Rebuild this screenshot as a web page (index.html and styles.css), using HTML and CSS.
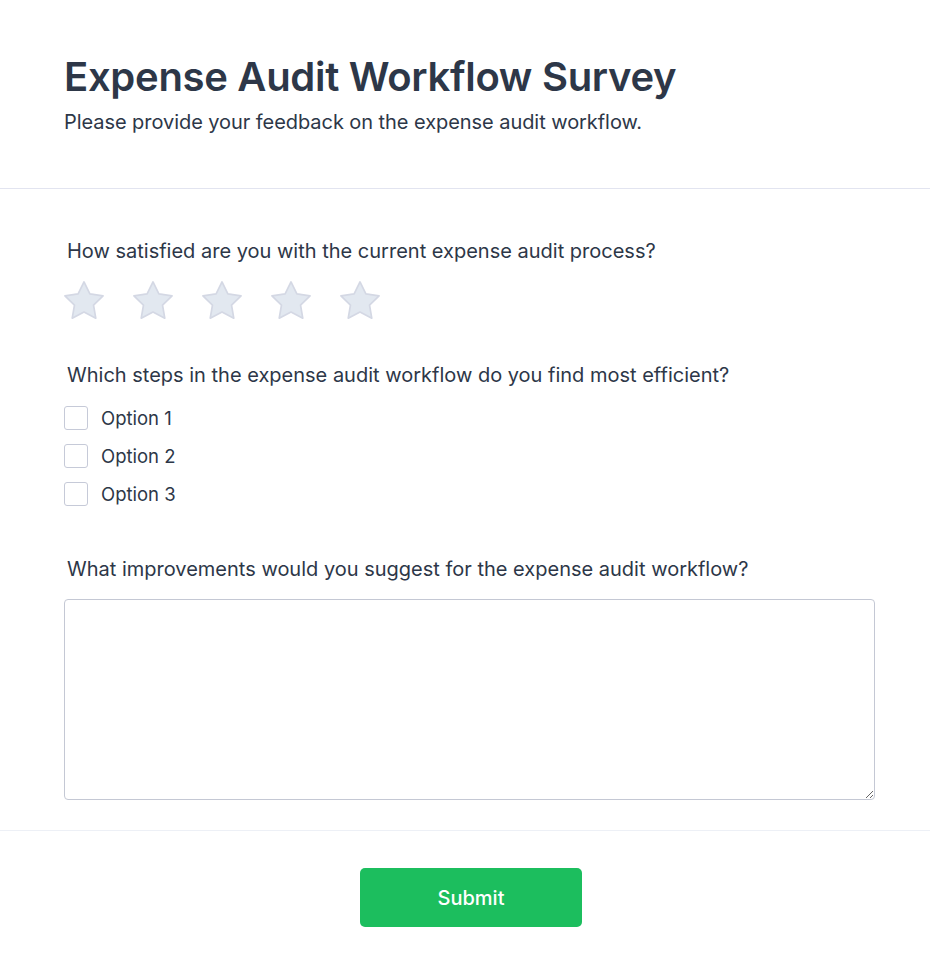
FILE: index.html
```html
<!DOCTYPE html>
<html lang="en">
<head>
<meta charset="utf-8">
<title>Expense Audit Workflow Survey</title>
<link rel="stylesheet" href="styles.css">
</head>
<body>
<div class="survey">
  <header class="survey-header">
    <h1 class="survey-title">Expense Audit Workflow Survey</h1>
    <p class="survey-subtitle">Please provide your feedback on the expense audit workflow.</p>
  </header>
  <main class="survey-body">
    <section class="question q-rating">
      <div class="question-label">How satisfied are you with the current expense audit process?</div>
      <div class="stars">
        <svg class="star" viewBox="1.5 1.5 21 21"><polygon points="12 2 15.09 8.26 22 9.27 17 14.14 18.18 21.02 12 17.77 5.82 21.02 7 14.14 2 9.27 8.91 8.26 12 2"/></svg>
        <svg class="star" viewBox="1.5 1.5 21 21"><polygon points="12 2 15.09 8.26 22 9.27 17 14.14 18.18 21.02 12 17.77 5.82 21.02 7 14.14 2 9.27 8.91 8.26 12 2"/></svg>
        <svg class="star" viewBox="1.5 1.5 21 21"><polygon points="12 2 15.09 8.26 22 9.27 17 14.14 18.18 21.02 12 17.77 5.82 21.02 7 14.14 2 9.27 8.91 8.26 12 2"/></svg>
        <svg class="star" viewBox="1.5 1.5 21 21"><polygon points="12 2 15.09 8.26 22 9.27 17 14.14 18.18 21.02 12 17.77 5.82 21.02 7 14.14 2 9.27 8.91 8.26 12 2"/></svg>
        <svg class="star" viewBox="1.5 1.5 21 21"><polygon points="12 2 15.09 8.26 22 9.27 17 14.14 18.18 21.02 12 17.77 5.82 21.02 7 14.14 2 9.27 8.91 8.26 12 2"/></svg>
      </div>
    </section>
    <section class="question q-checks">
      <div class="question-label">Which steps in the expense audit workflow do you find most efficient?</div>
      <div class="options">
        <label class="option"><span class="checkbox"></span><span class="option-text">Option 1</span></label>
        <label class="option"><span class="checkbox"></span><span class="option-text">Option 2</span></label>
        <label class="option"><span class="checkbox"></span><span class="option-text">Option 3</span></label>
      </div>
    </section>
    <section class="question q-text">
      <div class="question-label">What improvements would you suggest for the expense audit workflow?</div>
      <textarea class="answer"></textarea>
    </section>
  </main>
  <footer class="survey-footer">
    <button class="submit" type="button">Submit</button>
  </footer>
</div>
</body>
</html>
```

FILE: styles.css
```css
html, body {
  margin: 0;
  padding: 0;
  background: #ffffff;
}

body {
  font-family: Inter, "Noto Sans", sans-serif;
  color: #2d3748;
}

.survey-header {
  padding: 53px 64px 52px;
  border-bottom: 1px solid #e2e4f0;
}

.survey-title {
  margin: 0;
  font-size: 40px;
  line-height: 48px;
  font-weight: 600;
  letter-spacing: -0.3px;
  color: #2d3748;
}

.survey-subtitle {
  margin: 7px 0 0;
  font-size: 20px;
  line-height: 28px;
  font-weight: 400;
  letter-spacing: -0.06px;
}

.survey-body {
  padding: 48px 52px 30px 64px;
}

.question-label {
  padding-left: 3px;
  font-size: 20px;
  line-height: 28px;
  font-weight: 400;
  color: #2d3748;
}

.q-rating .stars {
  display: flex;
  gap: 29px;
  margin-top: 16px;
}

.star {
  width: 40px;
  height: 40px;
  fill: #e2e8f0;
  stroke: #d4d8e4;
  stroke-width: 0.9;
  stroke-linejoin: round;
}

.q-checks {
  margin-top: 40px;
}

.options {
  display: flex;
  flex-direction: column;
  gap: 10px;
  margin-top: 15px;
}

.option {
  display: flex;
  align-items: center;
  gap: 13px;
  font-size: 18.5px;
  line-height: 28px;
  color: #2d3748;
}

.checkbox {
  width: 24px;
  height: 24px;
  box-sizing: border-box;
  border: 1.5px solid #c6cad8;
  border-radius: 3px;
  background: #fff;
}

.q-text {
  margin-top: 47px;
}

.answer {
  display: block;
  box-sizing: border-box;
  width: 811px;
  height: 201px;
  margin-top: 16px;
  border: 1px solid #c4c8d4;
  border-radius: 4px;
  font-family: inherit;
  font-size: 16px;
  resize: vertical;
  padding: 8px;
}

.survey-footer {
  border-top: 1px solid #edf0f6;
  padding: 37px 52px 50px 64px;
  display: flex;
  justify-content: center;
}

.submit {
  width: 222px;
  height: 59px;
  border: none;
  border-radius: 5px;
  background: #1cbe5e;
  color: #ffffff;
  font-family: inherit;
  font-size: 20px;
  font-weight: 500;
  cursor: pointer;
}
```
